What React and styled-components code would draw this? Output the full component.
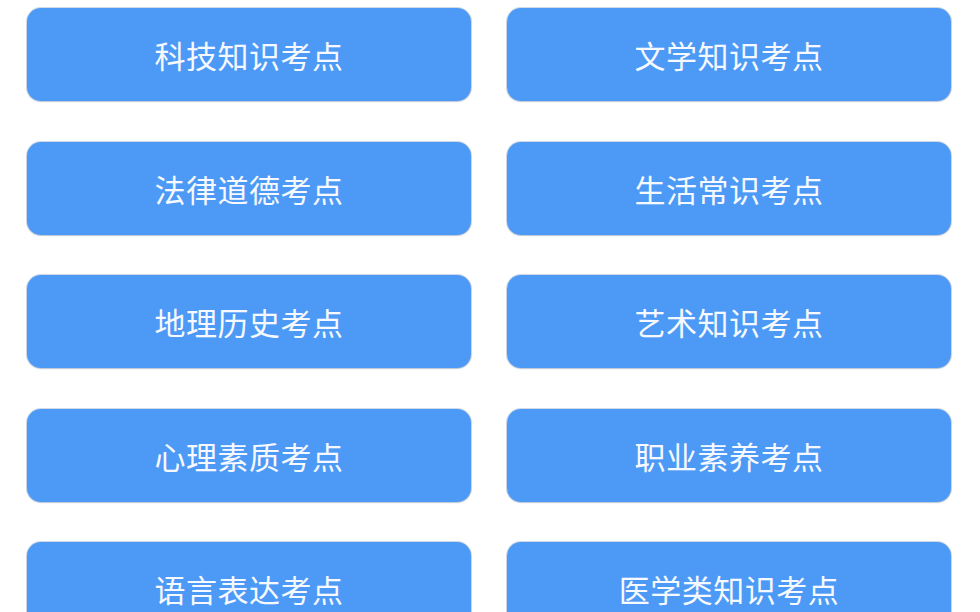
import React from "react";
import styled, { createGlobalStyle } from "styled-components";

const GlobalStyle = createGlobalStyle`
  html, body {
    margin: 0;
    padding: 0;
    background: #ffffff;
    overflow: hidden;
  }
  body {
    font-family: "Noto Sans CJK SC", "Noto Sans", sans-serif;
  }
`;

const Page = styled.div`
  width: 980px;
  height: 612px;
  box-sizing: border-box;
  padding: 8px 29px 0 27px;
  background: #ffffff;
`;

const Grid = styled.div`
  display: grid;
  grid-template-columns: 444px 444px;
  grid-auto-rows: 93px;
  column-gap: 36px;
  row-gap: 40.5px;
`;

const TopicButton = styled.button`
  display: flex;
  align-items: center;
  justify-content: center;
  border: none;
  border-radius: 14px;
  background: #4d9af6;
  box-shadow: 0 0 0 1px rgba(120, 150, 190, 0.35), 0 1px 2px rgba(0, 0, 0, 0.12);
  color: #f6f9ff;
  font-family: "Noto Sans CJK SC", "Noto Sans", sans-serif;
  font-size: 31px;
  font-weight: 400;
  letter-spacing: 0.5px;
  padding: 0;
  cursor: pointer;
`;

const topics = [
  "科技知识考点",
  "文学知识考点",
  "法律道德考点",
  "生活常识考点",
  "地理历史考点",
  "艺术知识考点",
  "心理素质考点",
  "职业素养考点",
  "语言表达考点",
  "医学类知识考点",
];

export default function App() {
  return (
    <>
      <GlobalStyle />
      <Page>
        <Grid>
          {topics.map((t) => (
            <TopicButton key={t}>{t}</TopicButton>
          ))}
        </Grid>
      </Page>
    </>
  );
}
